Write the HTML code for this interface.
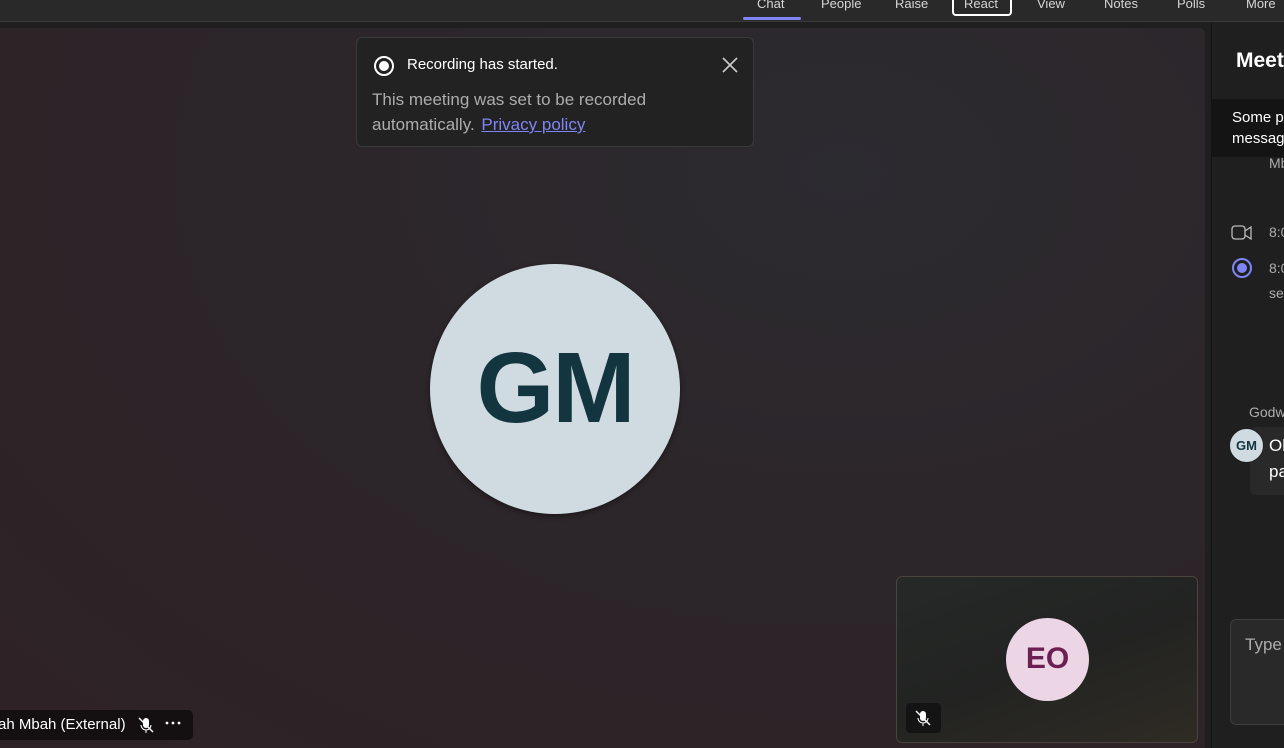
<!DOCTYPE html>
<html><head><style>
*{margin:0;padding:0;box-sizing:border-box}
body{width:1284px;height:748px;overflow:hidden;background:#1f1f1f;font-family:"Liberation Sans",sans-serif;position:relative;color:#fff}
.top{position:absolute;left:0;top:0;width:1284px;height:22px;background:#292929;border-bottom:1px solid #3a3a3a}
.tab{position:absolute;top:-4px;font-size:13px;color:#d6d6d6}
.stage{position:absolute;left:0;top:28px;width:1205px;height:720px;background:radial-gradient(ellipse at 70% 20%,#2c2b30 0%,#2c2529 50%,#2e2226 100%);border-radius:0 6px 0 0}
.panel{position:absolute;left:1211px;top:23px;width:73px;height:725px;background:#1f1f1f;border-left:1px solid #141414}
.t{position:absolute;white-space:nowrap}
</style></head><body>
<div class="top">
<span class="tab" style="left:757px">Chat</span>
<div style="position:absolute;left:743px;top:17px;width:58px;height:3px;background:#7f85f5;border-radius:2px"></div>
<span class="tab" style="left:821px">People</span>
<span class="tab" style="left:895px">Raise</span>
<div style="position:absolute;left:952px;top:-4px;width:60px;height:20px;border:2px solid #fff;border-radius:4px"></div>
<span class="tab" style="left:964px">React</span>
<span class="tab" style="left:1037px">View</span>
<span class="tab" style="left:1104px">Notes</span>
<span class="tab" style="left:1177px">Polls</span>
<span class="tab" style="left:1246px">More</span>
</div>
<div class="stage"></div>
<div style="position:absolute;left:356px;top:37px;width:398px;height:110px;background:#222;border:1px solid #3a3a3a;border-radius:6px">
<div style="position:absolute;left:17px;top:18px;width:20px;height:20px;border:2px solid #fff;border-radius:50%"><div style="position:absolute;left:3px;top:3px;width:10px;height:10px;background:#fff;border-radius:50%"></div></div>
<span class="t" style="left:50px;top:18px;font-size:15px">Recording has started.</span>
<svg style="position:absolute;left:364px;top:18px" width="18" height="18"><path d="M2 2L16 16M16 2L2 16" stroke="#ccc" stroke-width="1.6"/></svg>
<div class="t" style="left:15px;top:49px;font-size:17px;line-height:25px;color:#adadad">This meeting was set to be recorded<br>automatically. <span style="color:#7f85f5;text-decoration:underline;margin-left:2px">Privacy policy</span></div>
</div>
<div style="position:absolute;left:430px;top:264px;width:250px;height:250px;border-radius:50%;background:#cfdbe0;box-shadow:0 2px 6px rgba(0,0,0,.4)"></div>
<div class="t" style="left:430px;top:331px;width:250px;text-align:center;font-size:100px;font-weight:bold;color:#123540;letter-spacing:-2px">GM</div>
<div style="position:absolute;left:0;top:710px;width:193px;height:30px;background:#141011;border-radius:0 5px 5px 0"></div>
<span class="t" style="left:-2px;top:716px;font-size:15px;color:#fff">ah Mbah (External)</span>
<svg style="position:absolute;left:137px;top:716px" width="18" height="18"><rect x="6" y="2" width="6" height="10" rx="3" fill="#fff"/><path d="M4 9a5 5 0 0010 0M9 14v3" stroke="#fff" fill="none"/><path d="M2 2L16 16" stroke="#fff" stroke-width="1.5"/></svg>
<svg style="position:absolute;left:165px;top:720px" width="16" height="6"><circle cx="2" cy="3" r="1.4" fill="#fff"/><circle cx="8" cy="3" r="1.4" fill="#fff"/><circle cx="14" cy="3" r="1.4" fill="#fff"/></svg>
<div style="position:absolute;left:896px;top:576px;width:302px;height:167px;border:1px solid #4a443e;border-radius:6px;background:linear-gradient(160deg,#262928 0%,#222322 50%,#2f2b24 100%)"></div>
<div style="position:absolute;left:1006px;top:618px;width:83px;height:83px;border-radius:50%;background:#ecd5e4"></div>
<div class="t" style="left:1006px;top:642px;width:83px;text-align:center;font-size:30px;font-weight:bold;color:#6b1f52">EO</div>
<div style="position:absolute;left:906px;top:703px;width:35px;height:30px;background:#141414;border-radius:4px"></div>
<svg style="position:absolute;left:914px;top:709px" width="18" height="18"><rect x="6" y="2" width="6" height="10" rx="3" fill="#fff"/><path d="M4 9a5 5 0 0010 0M9 14v3" stroke="#fff" fill="none"/><path d="M2 2L16 16" stroke="#fff" stroke-width="1.5"/></svg>
<div class="panel">
<span class="t" style="left:24px;top:26px;font-size:21px;font-weight:bold">Meet</span>
<div style="position:absolute;left:0;top:76px;width:73px;height:58px;background:#141414"></div>
<div class="t" style="left:20px;top:84px;font-size:15px;line-height:21px">Some p<br>messag</div>
<span class="t" style="left:57px;top:132px;font-size:14px;color:#adadad">Mb</span>
<svg style="position:absolute;left:19px;top:202px" width="22" height="16"><rect x="1" y="1" width="13" height="13" rx="3" stroke="#bbb" fill="none" stroke-width="1.3"/><path d="M14 6l6-4v12l-6-4" stroke="#bbb" fill="none" stroke-width="1.3"/></svg>
<span class="t" style="left:57px;top:201px;font-size:14px;color:#adadad">8:0</span>
<div style="position:absolute;left:20px;top:235px;width:20px;height:20px;border:2px solid #7f85f5;border-radius:50%"><div style="position:absolute;left:3px;top:3px;width:10px;height:10px;background:#7f85f5;border-radius:50%"></div></div>
<span class="t" style="left:57px;top:237px;font-size:14px;color:#adadad">8:0</span>
<span class="t" style="left:57px;top:262px;font-size:14px;color:#adadad">se</span>
<span class="t" style="left:37px;top:381px;font-size:14px;color:#adadad">Godw</span>
<div style="position:absolute;left:38px;top:404px;width:40px;height:68px;background:#292929;border-radius:6px"></div>
<div style="position:absolute;left:17px;top:405px;width:35px;height:35px;border-radius:50%;background:#cfdbe0;border:1px solid #1f1f1f"></div>
<span class="t" style="left:17px;top:415px;width:35px;text-align:center;font-size:13px;font-weight:bold;color:#123540">GM</span>
<span class="t" style="left:57px;top:410px;font-size:17px;line-height:26px">Ol<br>pa</span>
<div style="position:absolute;left:18px;top:596px;width:60px;height:106px;border:1px solid #3d3d3d;border-radius:6px;background:#292929"></div>
<span class="t" style="left:33px;top:612px;font-size:17px;color:#adadad">Type</span>
</div>
</body></html>
